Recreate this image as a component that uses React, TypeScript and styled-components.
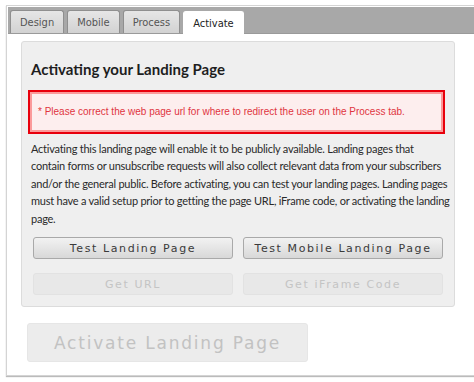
import React from "react";
import styled, { createGlobalStyle } from "styled-components";

const GlobalStyle = createGlobalStyle`
  html, body {
    margin: 0;
    padding: 0;
    background: #ffffff;
  }
  body {
    font-family: Lato, "Noto Sans", sans-serif;
  }
`;

const tabs = ["Design", "Mobile", "Process", "Activate"];

const App = () => {
  return (
    <>
      <GlobalStyle />
      <Page>
        <Frame>
          <TabBar>
            {tabs.map((t) => (
              <Tab key={t} active={t === "Activate"}>
                {t}
              </Tab>
            ))}
          </TabBar>
          <Body>
            <Panel>
              <Title>Activating your Landing Page</Title>
              <ErrorBox>
                * Please correct the web page url for where to redirect the user on the Process tab.
              </ErrorBox>
              <Text>
                Activating this landing page will enable it to be publicly available. Landing pages that
                <br />
                contain forms or unsubscribe requests will also collect relevant data from your subscribers
                <br />
                and/or the general public. Before activating, you can test your landing pages. Landing pages
                <br />
                must have a valid setup prior to getting the page URL, iFrame code, or activating the landing
                <br />
                page.
              </Text>
              <ButtonGrid>
                <Button>Test Landing Page</Button>
                <Button>Test Mobile Landing Page</Button>
                <Button disabled>Get URL</Button>
                <Button disabled>Get iFrame Code</Button>
              </ButtonGrid>
            </Panel>
            <BigButton disabled>Activate Landing Page</BigButton>
          </Body>
        </Frame>
      </Page>
    </>
  );
};

export default App;

const Page = styled.div`
  width: 474px;
  height: 382px;
  padding: 5px 0 0 6px;
  box-sizing: border-box;
  overflow: hidden;
`;

const Frame = styled.div`
  width: 480px;
  height: 371px;
  border: 1px solid #d4d4d4;
  border-right: none;
  box-sizing: border-box;
  padding: 1px 0 0 1px;
  box-shadow: 0 1px 1px #bbb;
`;

const TabBar = styled.div`
  display: flex;
  align-items: flex-end;
  gap: 3px;
  height: 26px;
  padding-left: 2px;
  background: #a8a8a8;
  border-bottom: 1px solid #9a9a9a;
`;

const Tab = styled.div<{ active?: boolean }>`
  height: 23px;
  padding: 0 9px;
  display: flex;
  align-items: center;
  box-sizing: border-box;
  font-family: "DejaVu Sans Condensed", "DejaVu Sans", Verdana, sans-serif;
  font-stretch: condensed;
  font-size: 11px;
  color: ${(p) => (p.active ? "#222" : "#555")};
  background: ${(p) => (p.active ? "#ffffff" : "linear-gradient(#e6e6e6, #d2d2d2)")};
  border: 1px solid ${(p) => (p.active ? "#ffffff" : "#8f8f8f")};
  border-bottom: none;
  border-radius: 3px 3px 0 0;
  margin-bottom: ${(p) => (p.active ? "-1px" : "0")};
`;

const Body = styled.div`
  padding: 7px 0 0 13px;
  display: flex;
  flex-direction: column;
  gap: 16px;
`;

const Panel = styled.div`
  width: 434px;
  box-sizing: border-box;
  background: #efefef;
  border: 1px solid #dcdcdc;
  border-radius: 3px;
  padding: 18px 9px 11px 6px;
`;

const Title = styled.h2`
  margin: 0 0 12px 3px;
  font-family: Lato, "Noto Sans", sans-serif;
  font-size: 15px;
  line-height: 18px;
  font-weight: 700;
  color: #1e1e1e;
`;

const ErrorBox = styled.div`
  border: 2px solid #e8000c;
  box-shadow: inset 0 0 0 2px #fb9a9a;
  background: #fdeeee;
  padding: 14px 8px 14px;
  font-family: "Liberation Sans", Arial, sans-serif;
  font-size: 10px;
  line-height: 12px;
  color: #e0353f;
`;

const Text = styled.p`
  margin: 6px 0 0 3px;
  font-family: Lato, "Noto Sans", sans-serif;
  font-size: 11px;
  line-height: 17.4px;
  letter-spacing: -0.24px;
  white-space: nowrap;
  color: #2a2a2a;
`;

const ButtonGrid = styled.div`
  display: grid;
  grid-template-columns: 200px 200px;
  column-gap: 10px;
  row-gap: 14px;
  margin: 10px 0 0 5px;
`;

const Button = styled.button`
  height: 22px;
  padding: 0;
  font-family: "DejaVu Sans", Verdana, sans-serif;
  font-size: 11px;
  letter-spacing: 1.6px;
  color: ${(p) => (p.disabled ? "#c4c4c4" : "#3a3a3a")};
  background: ${(p) => (p.disabled ? "#e8e8e8" : "linear-gradient(#f2f2f2, #d8d8d8)")};
  border: 1px solid ${(p) => (p.disabled ? "#e2e2e2" : "#a9a9a9")};
  border-radius: 3px;
`;

const BigButton = styled.button`
  width: 281px;
  height: 39px;
  padding: 0;
  margin-left: 6px;
  font-family: "DejaVu Sans", Verdana, sans-serif;
  font-size: 17px;
  letter-spacing: 1.8px;
  color: #c2c2c2;
  background: #ececec;
  border: 1px solid #e6e6e6;
  border-radius: 3px;
`;
